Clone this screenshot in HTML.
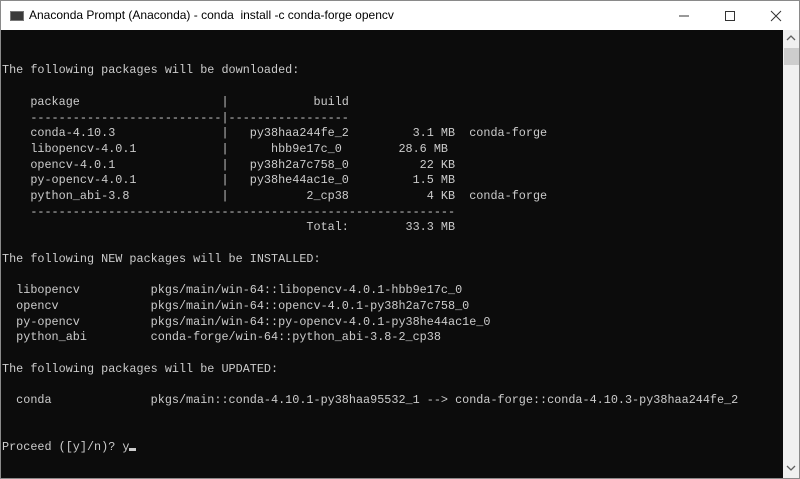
<!DOCTYPE html>
<html><head><style>
html,body{margin:0;padding:0;width:800px;height:479px;overflow:hidden;background:#fff;}
.win{position:absolute;left:0;top:0;width:798px;height:477px;border:1px solid #8a8a8a;background:#fff;}
.title{position:absolute;left:0;top:0;width:798px;height:29px;background:#fff;}
.title .t{position:absolute;left:28px;top:7px;font:12px "Liberation Sans",sans-serif;color:#000;white-space:pre;}
.icon{position:absolute;left:9px;top:10px;width:14px;height:10px;background:#3a3a3a;border:1px solid #777;box-sizing:border-box;}
.con{position:absolute;left:0;top:29px;width:782px;height:448px;background:#0c0c0c;}
pre{margin:0;position:absolute;left:1px;top:2px;font-family:"Liberation Mono",monospace;font-size:11.8px;line-height:15.7px;color:#cccccc;}
.sb{position:absolute;left:782px;top:29px;width:16px;height:448px;background:#f0f0f0;}
.thumb{position:absolute;left:1px;top:18px;width:15px;height:17px;background:#cdcdcd;}
.cur{display:inline-block;width:7px;height:3px;background:#ccc;vertical-align:-1px;}
</style></head><body>
<div class="win">
<div class="title"><div class="icon"></div><div class="t">Anaconda Prompt (Anaconda) - conda  install -c conda-forge opencv</div>
<svg style="position:absolute;left:670px;top:8px" width="120" height="14" viewBox="0 0 120 14">
<line x1="8" y1="7" x2="18" y2="7" stroke="#333" stroke-width="1"/>
<rect x="54.5" y="2.5" width="9" height="9" fill="none" stroke="#333" stroke-width="1"/>
<path d="M100 2 L110 12 M110 2 L100 12" stroke="#333" stroke-width="1"/>
</svg></div>
<div class="con"><pre>


The following packages will be downloaded:

    package                    |            build
    ---------------------------|-----------------
    conda-4.10.3               |   py38haa244fe_2         3.1 MB  conda-forge
    libopencv-4.0.1            |      hbb9e17c_0        28.6 MB
    opencv-4.0.1               |   py38h2a7c758_0          22 KB
    py-opencv-4.0.1            |   py38he44ac1e_0         1.5 MB
    python_abi-3.8             |           2_cp38           4 KB  conda-forge
    ------------------------------------------------------------
                                           Total:        33.3 MB

The following NEW packages will be INSTALLED:

  libopencv          pkgs/main/win-64::libopencv-4.0.1-hbb9e17c_0
  opencv             pkgs/main/win-64::opencv-4.0.1-py38h2a7c758_0
  py-opencv          pkgs/main/win-64::py-opencv-4.0.1-py38he44ac1e_0
  python_abi         conda-forge/win-64::python_abi-3.8-2_cp38

The following packages will be UPDATED:

  conda              pkgs/main::conda-4.10.1-py38haa95532_1 --> conda-forge::conda-4.10.3-py38haa244fe_2


Proceed ([y]/n)? y<span class="cur"></span></pre></div>
<div class="sb"><div class="thumb"></div>
<svg style="position:absolute;left:3px;top:5px" width="10" height="6"><path d="M1 5 L5 1 L9 5" fill="none" stroke="#606060" stroke-width="1.3"/></svg>
<svg style="position:absolute;left:3px;top:435px" width="10" height="6"><path d="M1 1 L5 5 L9 1" fill="none" stroke="#606060" stroke-width="1.3"/></svg>
</div>
</div>
</body></html>
